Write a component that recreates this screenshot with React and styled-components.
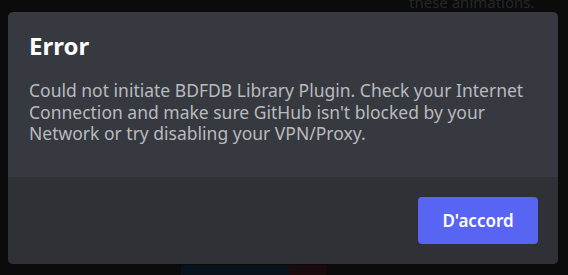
import React from 'react';
import styled, {createGlobalStyle} from 'styled-components';

const Global = createGlobalStyle`
    html, body {
        margin: 0;
        padding: 0;
        background: #0b0b0c;
        font-family: 'Noto Sans', 'Open Sans', sans-serif;
    }
`;

const Backdrop = styled.div`
    position: relative;
    width: 568px;
    height: 275px;
    overflow: hidden;
    background: #0b0b0c;
    padding: 12px 10px 0 8px;
    box-sizing: border-box;
`;

const Ghost = styled.div`
    position: absolute;
    top: -8px;
    left: 409px;
    font-size: 15px;
    color: #26272a;
`;

const BottomStrip = styled.div`
    position: absolute;
    left: 0;
    right: 0;
    top: 265px;
    height: 10px;
    display: flex;
`;

const StripBlock = styled.div`
    width: ${p => p.w}px;
    margin-left: ${p => p.ml || 0}px;
    background: ${p => p.c};
`;

const Modal = styled.div`
    position: relative;
    width: 550px;
    height: 252px;
    border-radius: 5px;
    overflow: hidden;
    background: #36393f;
    display: flex;
    flex-direction: column;
`;

const Body = styled.div`
    flex: 0 0 165px;
    padding: 0 18px 0 21px;
    box-sizing: border-box;
`;

const Title = styled.h1`
    margin: 19px 0 0;
    font-size: 24px;
    line-height: 30px;
    font-weight: 700;
    color: #ffffff;
`;

const Text = styled.p`
    margin: 19px 0 0;
    font-size: 17.5px;
    line-height: 21.5px;
    color: #b9bbbe;
`;

const Footer = styled.div`
    flex: 1;
    background: #2f3136;
    display: flex;
    justify-content: flex-end;
    align-items: center;
    padding: 0 20px;
`;

const Button = styled.button`
    width: 120px;
    height: 47px;
    border: 0;
    border-radius: 4px;
    background: #5865f2;
    color: #ffffff;
    font-family: inherit;
    font-size: 17px;
    font-weight: 600;
`;

const App = () => (
    <Backdrop>
        <Global />
        <Ghost>{'these animations.'}</Ghost>
        <BottomStrip>
            <StripBlock w={108} ml={181} c={'#08121d'} />
            <StripBlock w={37} c={'#1b0a0b'} />
        </BottomStrip>
        <Modal>
            <Body>
                <Title>{'Error'}</Title>
                <Text>
                    {
                        "Could not initiate BDFDB Library Plugin. Check your Internet Connection and make sure GitHub isn't blocked by your Network or try disabling your VPN/Proxy."
                    }
                </Text>
            </Body>
            <Footer>
                <Button>{"D'accord"}</Button>
            </Footer>
        </Modal>
    </Backdrop>
);

export default App;
